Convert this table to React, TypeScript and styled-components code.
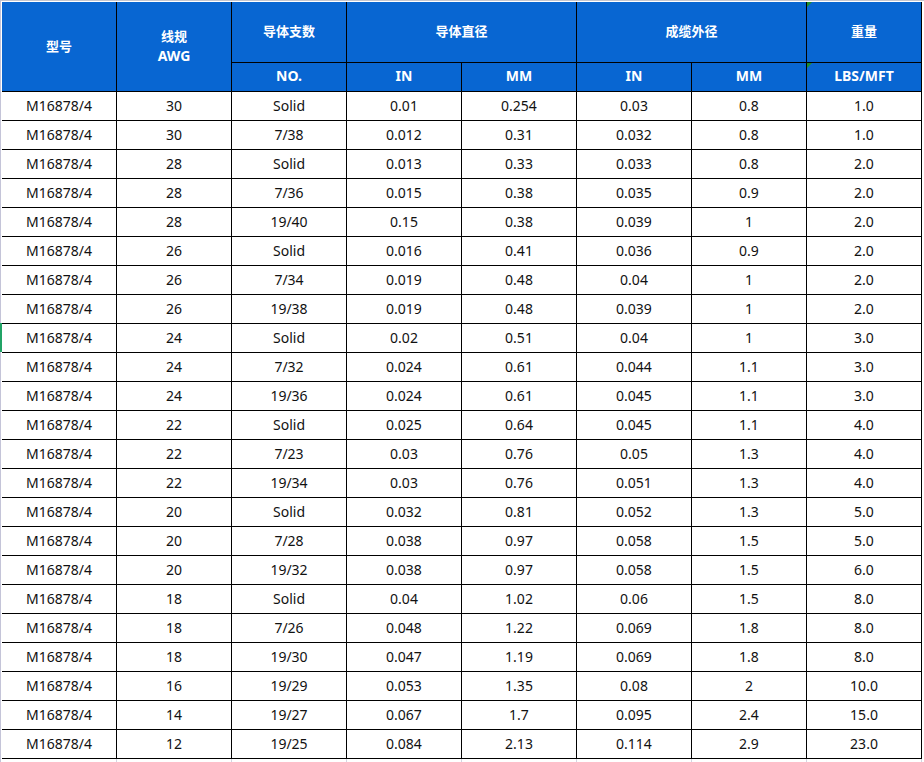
import React from 'react';
import styled, { createGlobalStyle } from 'styled-components';

const GlobalStyle = createGlobalStyle`
  html, body {
    margin: 0;
    padding: 0;
    background: #ffffff;
  }
`;

type Row = [string, string, string, string, string, string, string];

const rows: Row[] = [
  ['30', 'Solid', '0.01', '0.254', '0.03', '0.8', '1.0'],
  ['30', '7/38', '0.012', '0.31', '0.032', '0.8', '1.0'],
  ['28', 'Solid', '0.013', '0.33', '0.033', '0.8', '2.0'],
  ['28', '7/36', '0.015', '0.38', '0.035', '0.9', '2.0'],
  ['28', '19/40', '0.15', '0.38', '0.039', '1', '2.0'],
  ['26', 'Solid', '0.016', '0.41', '0.036', '0.9', '2.0'],
  ['26', '7/34', '0.019', '0.48', '0.04', '1', '2.0'],
  ['26', '19/38', '0.019', '0.48', '0.039', '1', '2.0'],
  ['24', 'Solid', '0.02', '0.51', '0.04', '1', '3.0'],
  ['24', '7/32', '0.024', '0.61', '0.044', '1.1', '3.0'],
  ['24', '19/36', '0.024', '0.61', '0.045', '1.1', '3.0'],
  ['22', 'Solid', '0.025', '0.64', '0.045', '1.1', '4.0'],
  ['22', '7/23', '0.03', '0.76', '0.05', '1.3', '4.0'],
  ['22', '19/34', '0.03', '0.76', '0.051', '1.3', '4.0'],
  ['20', 'Solid', '0.032', '0.81', '0.052', '1.3', '5.0'],
  ['20', '7/28', '0.038', '0.97', '0.058', '1.5', '5.0'],
  ['20', '19/32', '0.038', '0.97', '0.058', '1.5', '6.0'],
  ['18', 'Solid', '0.04', '1.02', '0.06', '1.5', '8.0'],
  ['18', '7/26', '0.048', '1.22', '0.069', '1.8', '8.0'],
  ['18', '19/30', '0.047', '1.19', '0.069', '1.8', '8.0'],
  ['16', '19/29', '0.053', '1.35', '0.08', '2', '10.0'],
  ['14', '19/27', '0.067', '1.7', '0.095', '2.4', '15.0'],
  ['12', '19/25', '0.084', '2.13', '0.114', '2.9', '23.0'],
];

const Sheet = styled.div`
  position: relative;
  width: 924px;
  height: 762px;
  box-sizing: border-box;
  border-top: 1px solid #c6c6ce;
  border-left: 1px solid #c4c4d8;
  padding: 1px 0 0 1px;
  font-family: 'Noto Sans', 'Noto Sans CJK SC', sans-serif;
`;

const Grid = styled.div`
  display: grid;
  grid-template-columns: repeat(8, 115px);
  grid-template-rows: 61px 29px repeat(23, 29px) 4px;
`;

const Head = styled.div<{ $rows?: number; $cols?: number; $twoLine?: boolean }>`
  position: relative;
  box-sizing: border-box;
  grid-row: span ${(p) => p.$rows ?? 1};
  grid-column: span ${(p) => p.$cols ?? 1};
  background: #0866d2;
  border-right: 1px solid #000;
  border-bottom: 1px solid #000;
  color: #ffffff;
  font-weight: 700;
  font-size: 14px;
  line-height: ${(p) => (p.$twoLine ? '20px' : '16px')};
  padding-bottom: 2px;
  display: flex;
  flex-direction: column;
  align-items: center;
  justify-content: center;
  text-align: center;
`;

const Cjk = styled.span`
  font-size: 13px;
`;

const Cell = styled.div`
  box-sizing: border-box;
  border-right: 1px solid #000;
  border-bottom: 1px solid #000;
  color: #111;
  font-size: 14px;
  line-height: 27px;
  text-align: center;
  white-space: nowrap;
`;

const Filler = styled.div`
  box-sizing: border-box;
  border-right: 1px solid #d4d4e2;
`;

const Marker = styled.span`
  position: absolute;
  top: 0;
  left: 0;
  width: 0;
  height: 0;
  border-top: 5px solid #1f8f2a;
  border-right: 5px solid transparent;
`;

const Selection = styled.div`
  position: absolute;
  left: -1px;
  top: 322px;
  width: 2px;
  height: 29px;
  background: #21a366;
`;

export default function App() {
  return (
    <>
      <GlobalStyle />
      <Sheet>
        <Grid>
          <Head $rows={2}>
            <Cjk>型号</Cjk>
          </Head>
          <Head $rows={2} $twoLine>
            <Cjk>线规</Cjk>
            <span>AWG</span>
          </Head>
          <Head>
            <Cjk>导体支数</Cjk>
          </Head>
          <Head $cols={2}>
            <Cjk>导体直径</Cjk>
          </Head>
          <Head $cols={2}>
            <Cjk>成缆外径</Cjk>
          </Head>
          <Head>
            <Marker />
            <Cjk>重量</Cjk>
          </Head>
          <Head>NO.</Head>
          <Head>IN</Head>
          <Head>MM</Head>
          <Head>IN</Head>
          <Head>MM</Head>
          <Head>
            <Marker />
            LBS/MFT
          </Head>
          {rows.map((r, i) => (
            <React.Fragment key={i}>
              <Cell>M16878/4</Cell>
              {r.map((v, j) => (
                <Cell key={j}>{v}</Cell>
              ))}
            </React.Fragment>
          ))}
          {Array.from({ length: 8 }).map((_, i) => (
            <Filler key={i} />
          ))}
        </Grid>
        <Selection />
      </Sheet>
    </>
  );
}
